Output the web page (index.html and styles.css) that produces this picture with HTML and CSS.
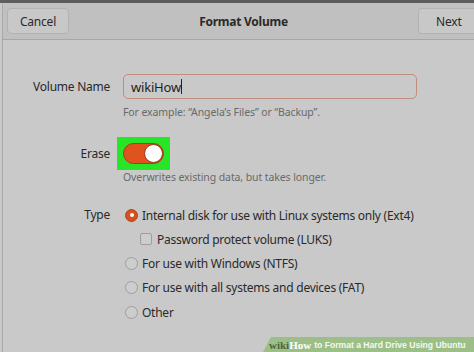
FILE: index.html
```html
<!DOCTYPE html>
<html>
<head>
<meta charset="utf-8">
<link rel="stylesheet" href="styles.css">
</head>
<body>
<div class="topstrip"></div>
<div class="window">
  <header class="header">
    <button class="btn btn-cancel">Cancel</button>
    <div class="title">Format Volume</div>
    <button class="btn btn-next">Next</button>
  </header>
  <main class="form">
    <div class="label label-name">Volume Name</div>
    <div class="field">
      <div class="input"><span>wikiHow</span><span class="caret"></span></div>
      <div class="hint">For example: “Angela’s Files” or “Backup”.</div>
    </div>

    <div class="label label-erase">Erase</div>
    <div class="field">
      <div class="highlight">
        <div class="switch"><div class="knob"></div></div>
      </div>
      <div class="hint hint-erase">Overwrites existing data, but takes longer.</div>
    </div>

    <div class="label label-type">Type</div>
    <div class="field options">
      <div class="opt"><span class="radio on"></span>Internal disk for use with Linux systems only (Ext4)</div>
      <div class="opt sub"><span class="check"></span>Password protect volume (LUKS)</div>
      <div class="opt"><span class="radio"></span>For use with Windows (NTFS)</div>
      <div class="opt"><span class="radio"></span>For use with all systems and devices (FAT)</div>
      <div class="opt"><span class="radio"></span>Other</div>
    </div>
  </main>
</div>
<div class="watermark"><span class="wiki">wiki</span><span class="how">How</span><span class="wm-text">to Format a Hard Drive Using Ubuntu</span></div>
</body>
</html>
```
FILE: styles.css
```css
html, body {
  margin: 0;
  padding: 0;
}
body {
  width: 474px;
  height: 352px;
  overflow: hidden;
  position: relative;
  background: #c9c9c9;
  font-family: "Noto Sans", "DejaVu Sans", sans-serif;
  color: #2a2a2a;
}
.topstrip {
  height: 3px;
  background: #5c5c5c;
}
.window {
  border-left: 1px solid #a9a9a9;
  margin-left: 2px;
  height: 349px;
  background: #c9c9c9;
}
.header {
  background: #c0c0c0;
  border-bottom: 1px solid #a6a6a6;
  border-top-left-radius: 4px;
  display: flex;
  align-items: center;
  justify-content: space-between;
  padding-left: 4px;
  box-sizing: border-box;
  height: 37px;
}
.btn {
  font-family: inherit;
  font-size: 12px;
  letter-spacing: -0.2px;
  color: #2a2a2a;
  background: #c8c8c8;
  border: 1px solid #b2b2b2;
  border-radius: 4px;
  height: 26px;
  padding: 0;
}
.btn-cancel {
  width: 62px;
}
.btn-next {
  width: 56px;
  border-right: none;
  border-radius: 4px 0 0 4px;
  text-align: left;
  padding-left: 17px;
}
.title {
  font-weight: bold;
  font-size: 12px;
  letter-spacing: -0.25px;
  color: #2a2a2a;
}
.form {
  display: grid;
  grid-template-columns: 107px 1fr;
  column-gap: 13px;
  padding-top: 34px;
  font-size: 12px;
  letter-spacing: -0.25px;
}
.label {
  text-align: right;
  line-height: 25px;
}
.input {
  width: 294px;
  height: 25px;
  box-sizing: border-box;
  border: 1.5px solid #bf8e7d;
  border-radius: 5px;
  padding-left: 7px;
  display: flex;
  align-items: center;
  font-size: 13px;
  letter-spacing: -0.2px;
  color: #1e1e1e;
}
.caret {
  width: 1px;
  height: 15px;
  background: #222;
}
.hint {
  font-size: 10.5px;
  letter-spacing: -0.1px;
  color: #6a6a6a;
  margin-top: 6px;
  line-height: 15px;
}
.label-erase {
  margin-top: 17px;
  line-height: 33px;
}
.highlight {
  margin-top: 17px;
  margin-left: -6px;
  width: 53px;
  height: 33px;
  box-sizing: border-box;
  background: #27e527;
  padding: 6px 0 0 6px;
}
.switch {
  width: 41px;
  height: 21px;
  box-sizing: border-box;
  border-radius: 11px;
  background: #e0531f;
  border: 1px solid #a53d17;
  position: relative;
}
.knob {
  position: absolute;
  right: 0;
  top: 0;
  width: 19px;
  height: 19px;
  box-sizing: border-box;
  border-radius: 50%;
  background: #fff;
  border: 1px solid #8e3a1c;
}
.hint-erase {
  margin-top: 0;
}
.label-type {
  margin-top: 18px;
  line-height: 24.25px;
}
.options {
  margin-top: 18px;
  margin-left: 2px;
}
.opt {
  display: flex;
  align-items: center;
  height: 24.25px;
  gap: 4px;
}
.opt.sub {
  margin-left: 15px;
  gap: 5px;
}
.radio {
  width: 13px;
  height: 13px;
  box-sizing: border-box;
  border-radius: 50%;
  border: 1px solid #9e9e9e;
  background: #cdcdcd;
  flex: none;
}
.radio.on {
  background: #d4501f;
  border-color: #b4441a;
  position: relative;
}
.radio.on::after {
  content: "";
  position: absolute;
  left: 3.5px;
  top: 3.5px;
  width: 4px;
  height: 4px;
  border-radius: 50%;
  background: #fff;
}
.check {
  width: 12px;
  height: 12px;
  box-sizing: border-box;
  border: 1px solid #9e9e9e;
  border-radius: 2px;
  background: #cdcdcd;
  flex: none;
}
.watermark {
  position: absolute;
  right: 0;
  bottom: 0;
  height: 15px;
  width: 211px;
  background: #9cbf88;
  clip-path: polygon(8px 0, 100% 0, 100% 100%, 0 100%);
  display: flex;
  align-items: center;
  padding-left: 6px;
  padding-top: 1px;
  box-sizing: border-box;
  white-space: nowrap;
  font-family: "Liberation Serif", serif;
  font-weight: bold;
}
.wiki {
  color: #4d6540;
  font-size: 11px;
  flex: none;
}
.how {
  color: #fff;
  font-size: 11px;
  flex: none;
}
.wm-text {
  flex: none;
  font-family: "Liberation Sans", sans-serif;
  font-size: 8.6px;
  color: #f4f8f0;
  margin-left: 3px;
}
```
